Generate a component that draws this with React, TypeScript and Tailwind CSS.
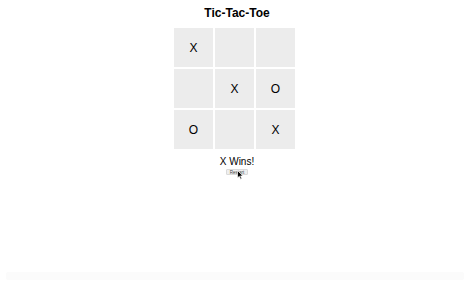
const board = ['X', '', '', '', 'X', 'O', 'O', '', 'X'];

export default function App() {
  return (
    <div className="relative h-[283px] w-[474px] overflow-hidden bg-white font-['Liberation_Sans',Arial,sans-serif] text-black">
      <div className="flex flex-col items-center pt-[6px]">
        <h1 className="text-[12px] font-bold leading-[14px]">Tic-Tac-Toe</h1>
        <div className="mt-[8px] mr-[5px] grid grid-cols-[repeat(3,39px)] gap-[2px]">
          {board.map((cell, i) => (
            <div key={i} className="flex h-[39px] w-[39px] items-center justify-center bg-[#ececec] text-[12px]">
              {cell}
            </div>
          ))}
        </div>
        <div className="mt-[7px] text-[10px] leading-[12px]">X Wins!</div>
        <div className="relative mt-[1px] flex">
          <button className="flex h-[6px] items-center rounded-[1px] border border-[#dadada] bg-[#efefef] px-[3px] text-[4.5px] leading-[5px] text-[#444]">
            Restart
          </button>
          <svg className="absolute left-[11px] top-[1px]" width="7" height="10" viewBox="0 0 7 10">
            <path d="M0.5 0.5 L0.5 8 L2.3 6.3 L3.6 9.3 L4.8 8.8 L3.6 5.9 L6 5.9 Z" fill="#000" stroke="#fff" strokeWidth="0.7" />
          </svg>
        </div>
      </div>
      <div className="absolute bottom-[3px] left-[6px] h-[8px] w-[458px] rounded-[2px] bg-[#fbfbfb]" />
    </div>
  );
}
